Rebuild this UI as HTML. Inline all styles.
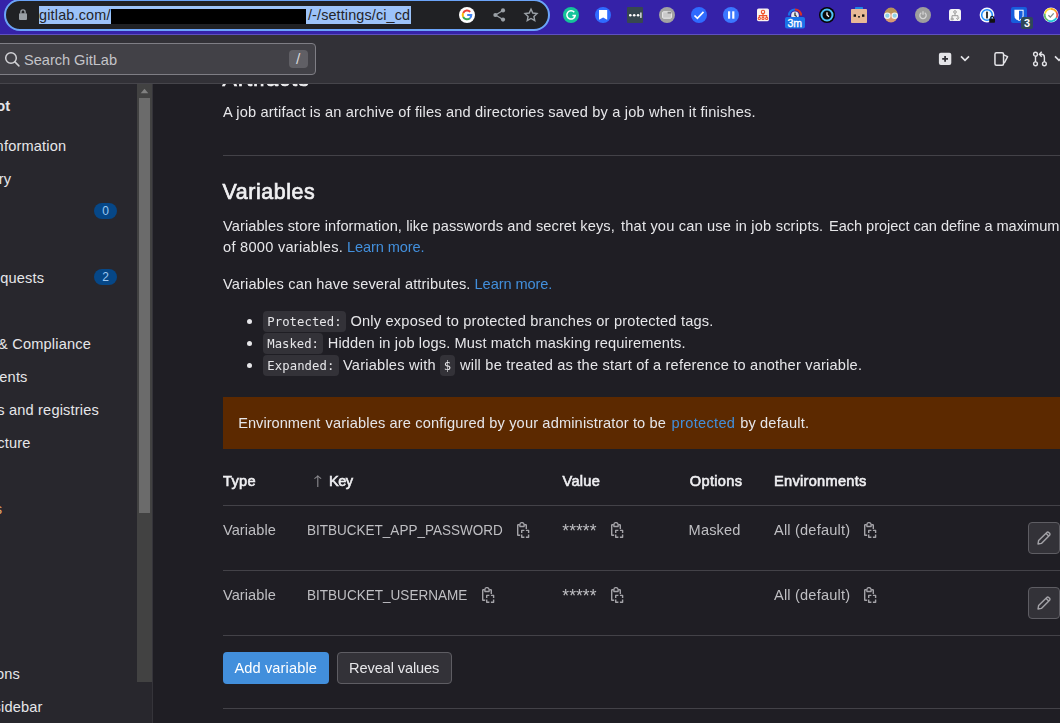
<!DOCTYPE html>
<html lang="en"><head><meta charset="utf-8"><title>CI/CD Settings · GitLab</title>
<style>
*{box-sizing:border-box}
html,body{margin:0;padding:0}
body{width:1060px;height:723px;overflow:hidden;position:relative;background:#1f1e24;font-family:'Liberation Sans', sans-serif;font-size:14.6px;line-height:20px;color:#e6e6e9}
.abs,.t,svg{position:absolute}
.t{white-space:pre;margin:0;padding:0;font-weight:400}
a.t{text-decoration:none}
#chrome{position:absolute;left:0;top:0;width:1060px;height:35px;background:#3522a8;border-bottom:1px solid #5e50bf;overflow:hidden}
#pill{position:absolute;left:4px;top:-1px;width:546px;height:32px;border:2px solid #6ba4f8;border-radius:16px;background:#202124}
#hl{position:absolute;left:39px;top:6px;width:372px;height:18px;background:#9cc3f9}
#redact{position:absolute;left:111px;top:9px;width:195px;height:15px;background:#000}
#hdr{position:absolute;left:0;top:35px;width:1060px;height:49px;background:#323137;border-bottom:1px solid #46454b;z-index:5}
#search{position:absolute;left:-8px;top:8px;width:324px;height:32px;border:1px solid #7f7e85;border-radius:4px;background:#424147}
#kbd{position:absolute;left:289px;top:15px;width:19px;height:18px;border-radius:4px;background:#605f65}
#side{position:absolute;left:0;top:84px;width:153px;height:639px;background:#28272d;border-right:1px solid #35343a;overflow:hidden;z-index:4}
#track{position:absolute;left:137px;top:0;width:15px;height:598px;background:#424242}
#thumb{position:absolute;left:2px;top:14px;width:11px;height:415px;background:#6b6b6b}
.badge{position:absolute;left:94px;width:23px;height:16px;border-radius:8px;background:#064787}
#main{position:absolute;left:153px;top:84px;width:907px;height:639px;overflow:hidden;will-change:transform}
#main .in{position:absolute;left:-153px;top:-84px;width:1060px;height:723px}
.sb{-webkit-text-stroke:.6px currentColor}
.sb3{-webkit-text-stroke:.35px currentColor}
.sbh{-webkit-text-stroke:.7px currentColor}
.hr{position:absolute;left:223px;width:837px;height:1px;background:#434248}
.code{position:absolute;height:21px;border-radius:4px;background:#333238}
.dot{position:absolute;left:247px;width:5px;height:5px;border-radius:50%;background:#e6e6e9}
#alert{position:absolute;left:223px;top:397px;width:837px;height:52px;background:#5c2900}
.btn{position:absolute;height:32px;border-radius:4px}
.edit{position:absolute;left:1028px;width:32px;height:32px;border-radius:4px;background:#333238;border:1px solid #5e5d63}
</style></head>
<body>

<div id="chrome">
 <div id="pill"></div>
 <svg style="left:18px;top:8px" width="10" height="13" viewBox="0 0 10 13"><rect x="1" y="5.300" width="8" height="6.700" rx="1" fill="#9aa0a6"/><path d="M2.900 5.500V4a2.100 2.100 0 0 1 4.200 0v1.500" fill="none" stroke="#9aa0a6" stroke-width="1.400"/></svg>
 <div id="hl"></div>
 <span class="t" style="top:4.70px;left:39.00px;font-size:14.4px;color:#242428;letter-spacing:0.191px;">gitlab.com/</span>
 <div id="redact"></div>
 <span class="t" style="top:4.70px;left:308.00px;font-size:14.4px;color:#242428;letter-spacing:0.126px;">/-/settings/ci_cd</span>
 <!-- google -->
 <svg style="left:459px;top:7px" width="16" height="16" viewBox="0 0 16 16"><circle cx="8" cy="8" r="8" fill="#fff"/>
  <g fill="none" stroke-width="2">
   <path d="M11.200 4.900A4.300 4.300 0 0 0 4.200 6" stroke="#ea4335"/>
   <path d="M4.200 6a4.300 4.300 0 0 0 0 4" stroke="#fbbc05"/>
   <path d="M4.200 10a4.300 4.300 0 0 0 6.700 1.200" stroke="#34a853"/>
   <path d="M10.900 11.200A4.300 4.300 0 0 0 12.300 8H8.200" stroke="#4285f4"/>
  </g></svg>
 <!-- share -->
 <svg style="left:491px;top:7px" width="16" height="16" viewBox="0 0 16 16"><path d="M12 3.500L4.500 8 12 12.500" fill="none" stroke="#9aa0a6" stroke-width="1.300"/><circle cx="12" cy="3.400" r="2.100" fill="#9aa0a6"/><circle cx="4.400" cy="8" r="2.100" fill="#9aa0a6"/><circle cx="12" cy="12.600" r="2.100" fill="#9aa0a6"/></svg>
 <!-- star -->
 <svg style="left:523px;top:7px" width="16" height="16" viewBox="0 0 16 16"><path d="M8 2.100l1.800 3.900 4.200.5-3.100 2.900.85 4.200L8 11.500l-3.750 2.100.85-4.200L2 6.500l4.200-.5z" fill="none" stroke="#9aa0a6" stroke-width="1.400" stroke-linejoin="miter"/></svg>

 <!-- extensions -->
 <svg style="left:563px;top:7px" width="16" height="16" viewBox="0 0 16 16"><circle cx="8" cy="8" r="8" fill="#15c39a"/><path d="M11.300 5.200A4.200 4.200 0 1 0 12.200 8.600H9.400" fill="none" stroke="#fff" stroke-width="1.500"/><path d="M11.300 10.700l1.500-2.300-2.600.2z" fill="#fff"/></svg>
 <svg style="left:595px;top:7px" width="16" height="16" viewBox="0 0 16 16"><circle cx="8" cy="8" r="8" fill="#2f6bff"/><path d="M4 3h8.200v9.800L8.100 10.600 4 12.800z" fill="#fff"/></svg>
 <svg style="left:627px;top:7px" width="16" height="16" viewBox="0 0 16 16"><rect width="16" height="16" rx="1" fill="#37474f"/><circle cx="3.300" cy="8.200" r="1.300" fill="#fff"/><circle cx="7.200" cy="8.200" r="1.300" fill="#fff"/><circle cx="11.100" cy="8.200" r="1.300" fill="#fff"/><rect x="13.300" y="5.500" width="1.200" height="5.400" fill="#fff"/></svg>
 <svg style="left:659px;top:7px" width="16" height="16" viewBox="0 0 16 16"><circle cx="8" cy="8" r="8" fill="#a3a3a3"/><rect x="3.600" y="4.800" width="8.800" height="6.400" rx=".8" fill="#c9c9c9" stroke="#ececec" stroke-width="1"/><rect x="8.600" y="4.800" width="3.800" height="1.800" fill="#8a8a8a"/></svg>
 <svg style="left:691px;top:7px" width="16" height="16" viewBox="0 0 16 16"><circle cx="8" cy="8" r="8" fill="#2f6bff"/><path d="M3.500 8.500l2.900 2.900 6.100-6.500" fill="none" stroke="#fff" stroke-width="1.700"/></svg>
 <svg style="left:723px;top:7px" width="16" height="16" viewBox="0 0 16 16"><circle cx="8" cy="8" r="8" fill="#3b77ff"/><rect x="5" y="4.300" width="2.200" height="7.400" fill="#fff"/><rect x="9.200" y="4.300" width="2.200" height="7.400" fill="#fff"/></svg>
 <svg style="left:755px;top:7px" width="16" height="16" viewBox="0 0 16 16"><rect x="2" y="1.600" width="12" height="12.600" rx="1.600" fill="#fbf3ef"/><g fill="none" stroke="#f0522a" stroke-width="1.100"><circle cx="8" cy="4.900" r="1.700"/><path d="M8 6.600v2M4.300 10.500V8.600h7.400v1.900M8 8.600v1.900"/><circle cx="4.300" cy="11.400" r="1.100"/><circle cx="8" cy="11.400" r="1.100"/><circle cx="11.700" cy="11.400" r="1.100"/></g></svg>
 <svg style="left:784px;top:6px" width="22" height="24" viewBox="0 0 22 24"><path d="M4.900 9.600a6.100 6.100 0 0 1 6.100-6.100" fill="none" stroke="#1a73e8" stroke-width="2.200"/><path d="M11 3.500a6.100 6.100 0 0 1 6.100 6.100" fill="none" stroke="#d93025" stroke-width="2.200"/><circle cx="11" cy="9.400" r="3.800" fill="#e8eaed"/><path d="M11 6.600v2.800l1.800 1" stroke="#202124" stroke-width="1.200" fill="none"/><rect x="1" y="11" width="20" height="11.600" rx="2" fill="#1a73e8"/></svg>
 <span class="t sb3" style="top:15.90px;left:787.50px;font-size:10.5px;color:#fff;line-height:14px;letter-spacing:0.006px;">3m</span>
 <svg style="left:819px;top:7px" width="16" height="16" viewBox="0 0 16 16"><circle cx="8" cy="8" r="8" fill="#050505"/><circle cx="8" cy="8" r="5.500" fill="#0a0a0a" stroke="#4fc3f7" stroke-width="2"/><path d="M8 5.200V8l2 1.700" stroke="#fff" stroke-width="1.300" fill="none"/></svg>
 <svg style="left:851px;top:6px" width="16" height="18" viewBox="0 0 16 18"><rect x="4" y="1" width="8" height="3" rx=".6" fill="#1e88e5"/><rect x="0" y="3" width="16" height="14" rx=".8" fill="#e8b996"/><rect x="2.600" y="8.400" width="2.400" height="2.400" fill="#111"/><rect x="11" y="8.400" width="2.400" height="2.400" fill="#111"/><rect x="7.200" y="10" width="1.600" height="1.600" fill="#111"/></svg>
 <svg style="left:883px;top:7px" width="16" height="16" viewBox="0 0 16 16"><ellipse cx="8" cy="8.300" rx="6.600" ry="7.300" fill="#d89a72"/><path d="M1.400 7.600a6.600 7 0 0 1 13.200 0C12 5.400 4 5.400 1.400 7.600z" fill="#b8935a"/><circle cx="4.300" cy="8.700" r="3.300" fill="#f4f4f4"/><circle cx="11.700" cy="8.700" r="3.300" fill="#f4f4f4"/><circle cx="4.300" cy="8.700" r="2.100" fill="#8fd0e6"/><circle cx="11.700" cy="8.700" r="2.100" fill="#8fd0e6"/></svg>
 <svg style="left:915px;top:7px" width="16" height="16" viewBox="0 0 16 16"><circle cx="8" cy="8" r="8" fill="#9e9e9e"/><path d="M6.300 5.700a3.200 3.200 0 1 0 3.400 0" fill="none" stroke="#d4d4d4" stroke-width="1.300"/><path d="M8 4.300v3.500" stroke="#d4d4d4" stroke-width="1.300"/></svg>
 <svg style="left:947px;top:7px" width="16" height="16" viewBox="0 0 16 16"><rect x="2" y="2" width="12" height="12" rx="2.600" fill="#f4f4f4"/><g fill="none" stroke="#9a9a9a" stroke-width="1"><circle cx="8" cy="5" r="1.300"/><path d="M8 6.300v2.400M5 11V8.700h6V11M4.200 11.300h2v1.500h-2zM9.500 11l1 1.600 1.400-2"/></g></svg>
 <svg style="left:979px;top:7px" width="17" height="17" viewBox="0 0 17 17"><circle cx="8" cy="8" r="7.400" fill="#f7f9fc"/><circle cx="8" cy="8" r="5.300" fill="none" stroke="#1a8cff" stroke-width="1.500"/><rect x="7.100" y="4.600" width="1.800" height="6.800" rx=".6" fill="#222"/><rect x="10.200" y="11.400" width="5.800" height="4.400" rx=".7" fill="#111"/><path d="M11.700 11.600v-1a1.400 1.400 0 0 1 2.800 0v1" fill="none" stroke="#111" stroke-width="1.100"/></svg>
 <svg style="left:1011px;top:7px" width="24" height="24" viewBox="0 0 24 24"><rect width="16" height="16" rx="2" fill="#175ddc"/><path d="M3.400 2.800h9.200v5.600c0 3-2.400 4.700-4.600 5.600-2.200-.9-4.600-2.600-4.600-5.600z" fill="#fff"/><path d="M8 3.800h3.600v4.600c0 2.300-1.800 3.700-3.600 4.500z" fill="#175ddc"/><rect x="10" y="10" width="12" height="12" rx="2" fill="#2f4858"/></svg>
 <span class="t" style="top:16.00px;left:1023.90px;font-size:11px;font-weight:700;color:#fff;line-height:14px;">3</span>
 <svg style="left:1043px;top:7px" width="16" height="16" viewBox="0 0 16 16"><circle cx="8" cy="8" r="7.600" fill="#fff"/><g fill="none" stroke-width="1.700"><path d="M8 1.800A6.200 6.200 0 0 1 13.400 5" stroke="#f9a825"/><path d="M13.400 5a6.200 6.200 0 0 1 0 6" stroke="#ef5350"/><path d="M13.400 11A6.200 6.200 0 0 1 5 13.400" stroke="#26c6da"/><path d="M5 13.400A6.200 6.200 0 0 1 2 6.500" stroke="#66bb6a"/><path d="M2 6.500A6.200 6.200 0 0 1 8 1.800" stroke="#fdd835"/></g><path d="M5.400 8.200l1.900 1.900 3.400-3.700" fill="none" stroke="#7d8a8a" stroke-width="1.300"/></svg>
</div>


<div id="hdr">
 <div id="search"></div>
 <svg style="left:3px;top:15px" width="18" height="18" viewBox="0 0 18 18" fill="none" stroke="#d2d2d6" stroke-width="1.500"><circle cx="8" cy="8" r="5.300"/><path d="M11.900 11.900l4 4" stroke-linecap="round"/></svg>
 <span class="t" style="top:14.50px;left:24.00px;color:#c4c4c9;letter-spacing:-0.025px;">Search GitLab</span>
 <div id="kbd"></div>
 <span class="t" style="top:13.50px;left:296.00px;font-size:15.5px;color:#d6d6da;">/</span>
 <svg style="left:937px;top:15px" width="16" height="16" viewBox="0 0 16 16"><rect x="1.900" y="2.800" width="12.400" height="12.200" rx="2" fill="#e4e4e8"/><path d="M8.100 6v5.800M5.200 8.900H11" stroke="#323137" stroke-width="1.800"/></svg>
 <svg style="left:959px;top:18px" width="12" height="10" viewBox="0 0 12 10"><path d="M2 3.400l4 4 4-4" fill="none" stroke="#e4e4e8" stroke-width="1.600"/></svg>
 <svg style="left:992px;top:15px" width="18" height="18" viewBox="0 0 18 18" fill="none" stroke="#e4e4e8" stroke-width="1.500" stroke-linejoin="round"><rect x="2.950" y="2.700" width="8.600" height="12.500" rx="1.500"/><path d="M11.700 4.900l3.900 1.700-3.400 6.500"/></svg>
 <svg style="left:1031px;top:15px" width="18" height="18" viewBox="0 0 18 18" fill="none" stroke="#e4e4e8" stroke-width="1.400"><circle cx="4.500" cy="4.200" r="1.900"/><circle cx="4.500" cy="13.800" r="1.900"/><circle cx="13.400" cy="13.800" r="1.900"/><path d="M4.500 6.100v5.800M13.400 11.900V7.300a3 3 0 0 0-3-3H8.600M10.700 1.800L8.400 4.300l2.300 2.500"/></svg>
 <svg style="left:1053px;top:18px" width="12" height="10" viewBox="0 0 12 10"><path d="M2 3.400l4 4 4-4" fill="none" stroke="#e4e4e8" stroke-width="1.600"/></svg>
</div>


<div id="side">
 <div id="track"><div id="thumb"></div>
  <svg style="left:3px;top:4px" width="9" height="6" viewBox="0 0 9 6"><path d="M4.500 .8L8.300 5.200H.7z" fill="#808080"/></svg>
 </div>
 <span class="t" style="top:12.20px;right:141.63px;font-weight:700;color:#e6e6e9;letter-spacing:0.170px;">ot</span>
 <span class="t" style="top:52.00px;right:85.73px;color:#e6e6e9;letter-spacing:0.170px;">Project information</span>
 <span class="t" style="top:85.00px;right:140.73px;color:#e6e6e9;letter-spacing:0.170px;">Repository</span>
 <div class="badge" style="top:119px"></div>
 <span class="t" style="top:119.30px;left:102.20px;font-size:12px;color:#9dc7f1;line-height:16px;">0</span>
 <span class="t" style="top:184.00px;right:107.83px;color:#e6e6e9;letter-spacing:0.170px;">Merge requests</span>
 <div class="badge" style="top:185px"></div>
 <span class="t" style="top:185.30px;left:102.20px;font-size:12px;color:#9dc7f1;line-height:16px;">2</span>
 <span class="t" style="top:250.00px;right:61.03px;color:#e6e6e9;letter-spacing:0.170px;">Security &amp; Compliance</span>
 <span class="t" style="top:283.00px;right:124.43px;color:#e6e6e9;letter-spacing:0.170px;">Deployments</span>
 <span class="t" style="top:316.00px;right:53.03px;color:#e6e6e9;letter-spacing:0.170px;">Packages and registries</span>
 <span class="t" style="top:349.00px;right:121.43px;color:#e6e6e9;letter-spacing:0.170px;">Infrastructure</span>
 <span class="t" style="top:415.00px;right:149.73px;color:#e0a368;letter-spacing:0.170px;">Analytics</span>
 <span class="t" style="top:580.00px;right:132.03px;color:#e6e6e9;letter-spacing:0.170px;">ons</span>
 <span class="t" style="top:613.00px;right:109.43px;color:#e6e6e9;letter-spacing:0.170px;">Collapse sidebar</span>
</div>


<div id="main"><div class="in">
 <h4 class="t sbh" style="top:64.60px;left:222.60px;font-size:21.4px;color:#f0f0f2;line-height:28px;letter-spacing:1.142px;">Artifacts</h4>
 <p class="t" style="top:102.00px;left:223.00px;letter-spacing:0.166px;">A job artifact is an archive of files and directories saved by a job when it finishes.</p>
 <div class="hr" style="top:155px"></div>
 <h4 class="t sbh" style="top:178.20px;left:222.60px;font-size:21.4px;color:#f0f0f2;line-height:28px;letter-spacing:0.576px;">Variables</h4>
 <p><span class="t" style="top:216.00px;left:223.00px;letter-spacing:0.087px;">Variables store information, like passwords and secret keys,</span>
 <span class="t" style="top:216.00px;left:616.80px;letter-spacing:0.188px;"> that you can use in job scripts.</span>
 <span class="t" style="top:216.00px;left:825.00px;letter-spacing:-0.050px;"> Each project can define a maximum</span></p>
 <span class="t" style="top:237.00px;left:223.00px;letter-spacing:0.269px;">of 8000 variables. </span>
 <a class="t" style="top:237.00px;left:347.00px;color:#428fdc;letter-spacing:-0.109px;">Learn more.</a>
 <span class="t" style="top:274.00px;left:223.00px;letter-spacing:0.138px;">Variables can have several attributes. </span>
 <a class="t" style="top:274.00px;left:474.60px;color:#428fdc;letter-spacing:-0.089px;">Learn more.</a>

 <div class="dot" style="top:319px"></div>
 <div class="code" style="left:263px;top:311px;width:83px"></div>
 <code class="t" style="top:312.00px;left:267.30px;font-size:12.25px;font-family:'DejaVu Sans Mono', 'Liberation Mono', monospace;letter-spacing:0.059px;">Protected:</code>
 <span class="t" style="top:311.00px;left:350.40px;letter-spacing:0.210px;">Only exposed to protected branches or protected tags.</span>
 <div class="dot" style="top:341px"></div>
 <div class="code" style="left:263px;top:333px;width:60px"></div>
 <code class="t" style="top:334.00px;left:267.30px;font-size:12.25px;font-family:'DejaVu Sans Mono', 'Liberation Mono', monospace;letter-spacing:0.010px;">Masked:</code>
 <span class="t" style="top:333.00px;left:327.80px;letter-spacing:0.129px;">Hidden in job logs. Must match masking requirements.</span>
 <div class="dot" style="top:363px"></div>
 <div class="code" style="left:263px;top:355px;width:76px"></div>
 <code class="t" style="top:356.00px;left:267.30px;font-size:12.25px;font-family:'DejaVu Sans Mono', 'Liberation Mono', monospace;letter-spacing:0.089px;">Expanded:</code>
 <span class="t" style="top:355.00px;left:343.00px;letter-spacing:0.218px;">Variables with</span>
 <div class="code" style="left:440px;top:355px;width:15px"></div>
 <code class="t" style="top:356.00px;left:443.80px;font-size:12.25px;font-family:'DejaVu Sans Mono', 'Liberation Mono', monospace;">$</code>
 <span class="t" style="top:355.00px;left:460.00px;letter-spacing:0.200px;">will be treated as the start of a reference to another variable.</span>

 <div id="alert"></div>
 <span class="t" style="top:412.70px;left:238.20px;letter-spacing:0.026px;">Environment</span>
 <span class="t" style="top:412.70px;left:321.40px;letter-spacing:0.153px;"> variables are configured by your administrator to be </span>
 <a class="t" style="top:412.70px;left:671.60px;color:#428fdc;letter-spacing:0.318px;">protected</a>
 <span class="t" style="top:412.70px;left:736.00px;letter-spacing:0.145px;"> by default.</span>

 <span class="t sb" style="top:471.00px;left:223.00px;color:#efeff2;letter-spacing:0.320px;">Type</span>
 <span class="t" style="top:471.10px;left:309.60px;font-size:13px;color:#8a898e;font-family:'Noto Sans CJK JP', sans-serif;transform:scaleX(1.2);transform-origin:0 0;">↑</span>
 <span class="t sb" style="top:471.00px;left:329.00px;color:#efeff2;letter-spacing:-0.578px;">Key</span>
 <span class="t sb" style="top:471.00px;left:562.60px;color:#efeff2;letter-spacing:0.237px;">Value</span>
 <span class="t sb" style="top:471.00px;left:689.80px;color:#efeff2;letter-spacing:0.317px;">Options</span>
 <span class="t sb" style="top:471.00px;left:774.00px;color:#efeff2;letter-spacing:0.288px;">Environments</span>
 <div class="hr" style="top:505px"></div>

 <span class="t" style="top:520.00px;left:223.00px;color:#bfbfc3;letter-spacing:0.047px;">Variable</span>
 <span class="t" style="top:520.00px;left:306.60px;color:#bfbfc3;transform:scaleX(0.9262);transform-origin:0 0;">BITBUCKET_APP_PASSWORD</span>
 <svg style="left:515px;top:522px" width="16" height="17" viewBox="0 0 16 17" fill="none" stroke="#a4a3a8" stroke-width="1.4" stroke-linejoin="round"><path d="M5.2 13.3 H3.3 Q2.7 13.3 2.7 12.7 V3.3 Q2.7 2.7 3.3 2.7 H4.8 M9.2 2.7 H10.7 Q11.3 2.7 11.3 3.3 V6.9"/><path d="M4.9 4.5 V2.7 A2.1 2.1 0 0 1 9.1 2.7 V4.5 Z" stroke-width="1.3"/><path d="M6.7 11.1 V8.4 H9.4 M10.900 8.4 H13.600 V11.1 M13.600 12.600 V15.300 H10.900 M9.4 15.300 H6.7 V12.600"/></svg>
 <span class="t" style="top:521.20px;left:562.30px;font-size:17.5px;color:#bfbfc3;letter-spacing:0.034px;">*****</span>
 <svg style="left:609px;top:522px" width="16" height="17" viewBox="0 0 16 17" fill="none" stroke="#a4a3a8" stroke-width="1.4" stroke-linejoin="round"><path d="M5.2 13.3 H3.3 Q2.7 13.3 2.7 12.7 V3.3 Q2.7 2.7 3.3 2.7 H4.8 M9.2 2.7 H10.7 Q11.3 2.7 11.3 3.3 V6.9"/><path d="M4.9 4.5 V2.7 A2.1 2.1 0 0 1 9.1 2.7 V4.5 Z" stroke-width="1.3"/><path d="M6.7 11.1 V8.4 H9.4 M10.900 8.4 H13.600 V11.1 M13.600 12.600 V15.300 H10.900 M9.4 15.300 H6.7 V12.600"/></svg>
 <span class="t" style="top:520.00px;left:688.60px;color:#bfbfc3;letter-spacing:0.138px;">Masked</span>
 <span class="t" style="top:520.00px;left:774.00px;color:#bfbfc3;letter-spacing:0.182px;">All (default)</span>
 <svg style="left:862px;top:522px" width="16" height="17" viewBox="0 0 16 17" fill="none" stroke="#a4a3a8" stroke-width="1.4" stroke-linejoin="round"><path d="M5.2 13.3 H3.3 Q2.7 13.3 2.7 12.7 V3.3 Q2.7 2.7 3.3 2.7 H4.8 M9.2 2.7 H10.7 Q11.3 2.7 11.3 3.3 V6.9"/><path d="M4.9 4.5 V2.7 A2.1 2.1 0 0 1 9.1 2.7 V4.5 Z" stroke-width="1.3"/><path d="M6.7 11.1 V8.4 H9.4 M10.900 8.4 H13.600 V11.1 M13.600 12.600 V15.300 H10.900 M9.4 15.300 H6.7 V12.600"/></svg>
 <div class="edit" style="top:522px"></div><svg style="left:1036px;top:530px" width="16" height="16" viewBox="0 0 16 16" fill="none" stroke="#a4a3a8" stroke-width="1.4" stroke-linejoin="round"><path d="M2 14l.6-3.400 8.200-8.200a1.300 1.300 0 0 1 1.850 0l.95.95a1.300 1.300 0 0 1 0 1.850l-8.200 8.200z"/><path d="M9.900 3.300l2.800 2.800"/></svg>
 <div class="hr" style="top:570px"></div>

 <span class="t" style="top:585.00px;left:223.00px;color:#bfbfc3;letter-spacing:0.047px;">Variable</span>
 <span class="t" style="top:585.00px;left:306.60px;color:#bfbfc3;transform:scaleX(0.9286);transform-origin:0 0;">BITBUCKET_USERNAME</span>
 <svg style="left:480px;top:587px" width="16" height="17" viewBox="0 0 16 17" fill="none" stroke="#a4a3a8" stroke-width="1.4" stroke-linejoin="round"><path d="M5.2 13.3 H3.3 Q2.7 13.3 2.7 12.7 V3.3 Q2.7 2.7 3.3 2.7 H4.8 M9.2 2.7 H10.7 Q11.3 2.7 11.3 3.3 V6.9"/><path d="M4.9 4.5 V2.7 A2.1 2.1 0 0 1 9.1 2.7 V4.5 Z" stroke-width="1.3"/><path d="M6.7 11.1 V8.4 H9.4 M10.900 8.4 H13.600 V11.1 M13.600 12.600 V15.300 H10.900 M9.4 15.300 H6.7 V12.600"/></svg>
 <span class="t" style="top:586.20px;left:562.30px;font-size:17.5px;color:#bfbfc3;letter-spacing:0.034px;">*****</span>
 <svg style="left:609px;top:587px" width="16" height="17" viewBox="0 0 16 17" fill="none" stroke="#a4a3a8" stroke-width="1.4" stroke-linejoin="round"><path d="M5.2 13.3 H3.3 Q2.7 13.3 2.7 12.7 V3.3 Q2.7 2.7 3.3 2.7 H4.8 M9.2 2.7 H10.7 Q11.3 2.7 11.3 3.3 V6.9"/><path d="M4.9 4.5 V2.7 A2.1 2.1 0 0 1 9.1 2.7 V4.5 Z" stroke-width="1.3"/><path d="M6.7 11.1 V8.4 H9.4 M10.900 8.4 H13.600 V11.1 M13.600 12.600 V15.300 H10.900 M9.4 15.300 H6.7 V12.600"/></svg>
 <span class="t" style="top:585.00px;left:774.00px;color:#bfbfc3;letter-spacing:0.182px;">All (default)</span>
 <svg style="left:862px;top:587px" width="16" height="17" viewBox="0 0 16 17" fill="none" stroke="#a4a3a8" stroke-width="1.4" stroke-linejoin="round"><path d="M5.2 13.3 H3.3 Q2.7 13.3 2.7 12.7 V3.3 Q2.7 2.7 3.3 2.7 H4.8 M9.2 2.7 H10.7 Q11.3 2.7 11.3 3.3 V6.9"/><path d="M4.9 4.5 V2.7 A2.1 2.1 0 0 1 9.1 2.7 V4.5 Z" stroke-width="1.3"/><path d="M6.7 11.1 V8.4 H9.4 M10.900 8.4 H13.600 V11.1 M13.600 12.600 V15.300 H10.900 M9.4 15.300 H6.7 V12.600"/></svg>
 <div class="edit" style="top:587px"></div><svg style="left:1036px;top:595px" width="16" height="16" viewBox="0 0 16 16" fill="none" stroke="#a4a3a8" stroke-width="1.4" stroke-linejoin="round"><path d="M2 14l.6-3.400 8.200-8.200a1.300 1.300 0 0 1 1.850 0l.95.95a1.300 1.300 0 0 1 0 1.850l-8.200 8.200z"/><path d="M9.900 3.300l2.800 2.800"/></svg>
 <div class="hr" style="top:635px"></div>

 <div class="btn" style="left:223px;top:652px;width:106px;background:#428fdc"></div>
 <span class="t" style="top:657.60px;left:234.40px;color:#fff;letter-spacing:0.133px;">Add variable</span>
 <div class="btn" style="left:337px;top:652px;width:115px;background:#333238;border:1px solid #5e5d63"></div>
 <span class="t" style="top:657.60px;left:349.00px;color:#e6e6e9;letter-spacing:-0.106px;">Reveal values</span>
 <div class="hr" style="top:708px"></div>
</div></div>

</body></html>
